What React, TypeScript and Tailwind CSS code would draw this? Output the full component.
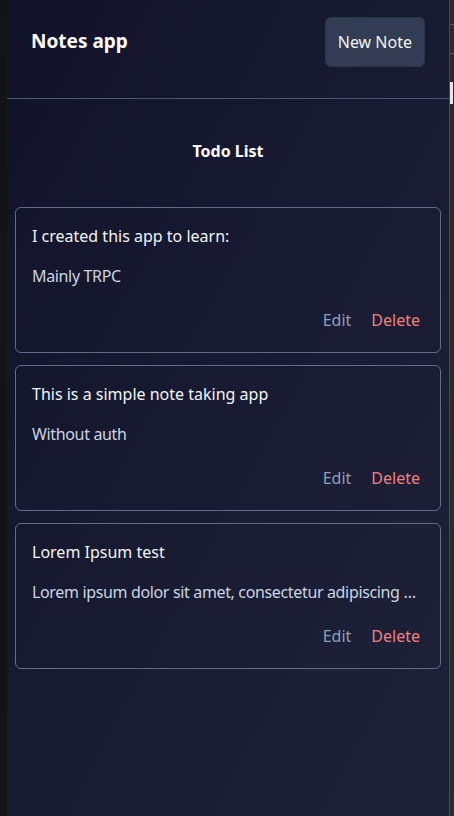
const notes = [
  { id: 1, title: "I created this app to learn:", body: "Mainly TRPC" },
  { id: 2, title: "This is a simple note taking app", body: "Without auth" },
  {
    id: 3,
    title: "Lorem Ipsum test",
    body: "Lorem ipsum dolor sit amet, consectetur adipiscing …",
  },
];

function NoteCard({ title, body }: { title: string; body: string }) {
  return (
    <div className="rounded-md border border-[#5f6d8a] px-4 pt-4 pb-5">
      <h3 className="text-base leading-6 text-[#f1f5f9]">{title}</h3>
      <p className="mt-4 whitespace-nowrap text-base leading-6 tracking-[-0.35px] text-[#cbd5e1]">{body}</p>
      <div className="mt-5 flex justify-end gap-3">
        <button className="px-1 text-base leading-6 text-[#8ea0ba]">Edit</button>
        <button className="px-1 text-base leading-6 text-[#f08080]">Delete</button>
      </div>
    </div>
  );
}

export default function App() {
  return (
    <div
      className="flex h-[816px] w-full overflow-hidden bg-[#141414]"
      style={{ fontFamily: '"Noto Sans", "Open Sans", sans-serif' }}
    >
      <div className="w-[7px] shrink-0 bg-[#141414]" />
      <main className="flex min-w-0 flex-1 flex-col bg-linear-to-br from-[#12132a] to-[#1e2238]">
        <header className="flex items-start justify-between border-b border-[#4b5670] pl-6 pr-6 pt-[17px] pb-[31px]">
          <h1 className="mt-[10px] text-[19px] font-bold leading-7 text-white">Notes app</h1>
          <button className="rounded-md border border-[#2c3548] bg-[#323c52] px-3 py-3 text-base leading-6 text-[#f1f5f9]">
            New Note
          </button>
        </header>
        <section className="px-2">
          <h2 className="mt-10 mb-11 text-center text-base font-bold leading-6 text-white">Todo List</h2>
          <div className="flex flex-col gap-3">
            {notes.map((n) => (
              <NoteCard key={n.id} title={n.title} body={n.body} />
            ))}
          </div>
        </section>
      </main>
      <div className="flex w-[5px] shrink-0 flex-col border-l border-[#4a4a4a] bg-[#2b2b2b]">
        <div className="h-[25px] border-b border-[#555]" />
        <div className="h-[29px] border-b border-[#555]" />
        <div className="mt-[28px] h-[22px] w-[3px] bg-[#e5e5e5]" />
      </div>
    </div>
  );
}
